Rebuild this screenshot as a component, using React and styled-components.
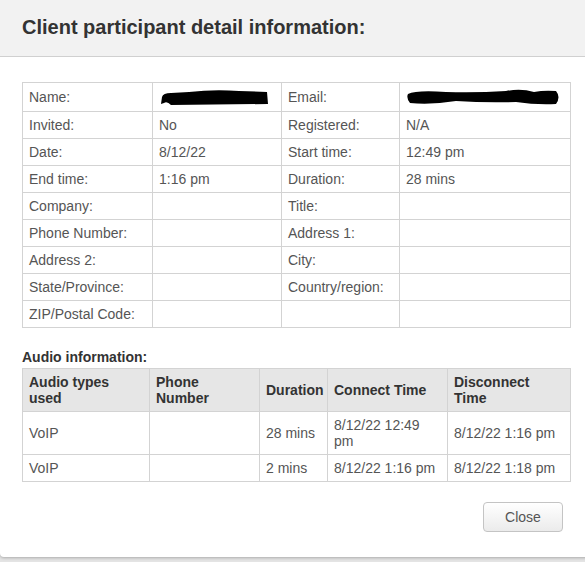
import React from "react";
import styled, { createGlobalStyle } from "styled-components";

const GlobalStyle = createGlobalStyle`
  html, body {
    margin: 0;
    padding: 0;
    background: #e4e4e4;
    overflow: hidden;
    font-family: "Liberation Sans", Arial, sans-serif;
  }
`;

const Page = styled.div`
  width: 585px;
  height: 562px;
  overflow: hidden;
`;

const Dialog = styled.div`
  width: 620px;
  height: 557px;
  background: #fff;
  border-radius: 0 0 4px 4px;
  box-shadow: 0 1px 3px rgba(0, 0, 0, 0.25);
  display: flex;
  flex-direction: column;
`;

const Header = styled.div`
  height: 57px;
  background: #f2f2f2;
  border-bottom: 1px solid #d0d0d0;
  display: flex;
  align-items: center;
  padding: 0 22px 2px;
  box-sizing: border-box;
  h1 {
    margin: 0;
    font-size: 20px;
    font-weight: bold;
    color: #333;
  }
`;

const Body = styled.div`
  padding: 25px 22px 0 22px;
  display: flex;
  flex-direction: column;
  width: 548px;
`;

const Table = styled.table`
  width: 548px;
  border-collapse: collapse;
  table-layout: fixed;
  font-size: 14px;
  line-height: 16px;
  color: #555;

  td, th {
    border: 1px solid #d3d3d3;
    padding: 5px 6px;
    vertical-align: middle;
    text-align: left;
    overflow: hidden;
  }
  th {
    background: #e6e6e6;
    color: #333;
    font-weight: bold;
  }
`;

const Col = styled.col`
  width: ${(p) => p.$w}px;
`;

const SectionTitle = styled.div`
  margin-top: 21px;
  margin-bottom: 3px;
  font-size: 14px;
  line-height: 16px;
  font-weight: bold;
  color: #333;
`;

const Footer = styled.div`
  display: flex;
  justify-content: flex-end;
  padding-top: 20px;
  padding-right: 7px;
`;

const Button = styled.button`
  width: 80px;
  height: 30px;
  border: 1px solid #c4c4c4;
  border-radius: 4px;
  background: linear-gradient(#ffffff, #ebebeb);
  font-family: "Liberation Sans", Arial, sans-serif;
  font-size: 14px;
  color: #555;
  cursor: pointer;
`;

const Redact = styled.svg`
  display: block;
`;

const NameBlob = () => (
  <Redact width="110" height="16" viewBox="0 0 110 16">
    <path
      d="M3 8 Q4 4 12 4 L30 3 Q55 0 80 2 L108 3 L109 15 L12 16 Q8 12 5 14 L2 15 Z"
      fill="#000"
    />
  </Redact>
);

const EmailBlob = () => (
  <Redact width="154" height="18" viewBox="0 0 154 18">
    <path
      d="M2 6 Q10 2 40 4 Q70 5 100 3 Q115 0 128 4 Q138 2 150 3 Q155 9 150 16 Q130 17 110 14 Q80 15 50 13 Q25 17 4 15 Q0 10 2 6 Z"
      fill="#000"
    />
  </Redact>
);

const details = [
  ["Name:", <NameBlob />, "Email:", <EmailBlob />],
  ["Invited:", "No", "Registered:", "N/A"],
  ["Date:", "8/12/22", "Start time:", "12:49 pm"],
  ["End time:", "1:16 pm", "Duration:", "28 mins"],
  ["Company:", "", "Title:", ""],
  ["Phone Number:", "", "Address 1:", ""],
  ["Address 2:", "", "City:", ""],
  ["State/Province:", "", "Country/region:", ""],
  ["ZIP/Postal Code:", "", "", ""],
];

const detailCols = [130, 129, 118, 171];

const audioCols = [127, 110, 68, 120, 123];

const audioHead = [
  ["Audio types", "used"],
  ["Phone", "Number"],
  ["Duration"],
  ["Connect Time"],
  ["Disconnect", "Time"],
];

const audio = [
  ["VoIP", "", "28 mins", "8/12/22 12:49 pm", "8/12/22 1:16 pm"],
  ["VoIP", "", "2 mins", "8/12/22 1:16 pm", "8/12/22 1:18 pm"],
];

export default function App() {
  return (
    <Page>
      <GlobalStyle />
      <Dialog>
        <Header>
          <h1>Client participant detail information:</h1>
        </Header>
        <Body>
          <Table>
            <colgroup>
              {detailCols.map((w, i) => (
                <Col key={i} $w={w} />
              ))}
            </colgroup>
            <tbody>
              {details.map((row, i) => (
                <tr key={i}>
                  {row.map((cell, j) => (
                    <td key={j}>{cell}</td>
                  ))}
                </tr>
              ))}
            </tbody>
          </Table>

          <SectionTitle>Audio information:</SectionTitle>
          <Table>
            <colgroup>
              {audioCols.map((w, i) => (
                <Col key={i} $w={w} />
              ))}
            </colgroup>
            <thead>
              <tr>
                {audioHead.map((lines, i) => (
                  <th key={i}>
                    {lines.map((l, k) => (
                      <React.Fragment key={k}>
                        {k > 0 && <br />}
                        {l}
                      </React.Fragment>
                    ))}
                  </th>
                ))}
              </tr>
            </thead>
            <tbody>
              {audio.map((row, i) => (
                <tr key={i}>
                  {row.map((cell, j) => (
                    <td key={j}>{cell}</td>
                  ))}
                </tr>
              ))}
            </tbody>
          </Table>

          <Footer>
            <Button>Close</Button>
          </Footer>
        </Body>
      </Dialog>
    </Page>
  );
}
